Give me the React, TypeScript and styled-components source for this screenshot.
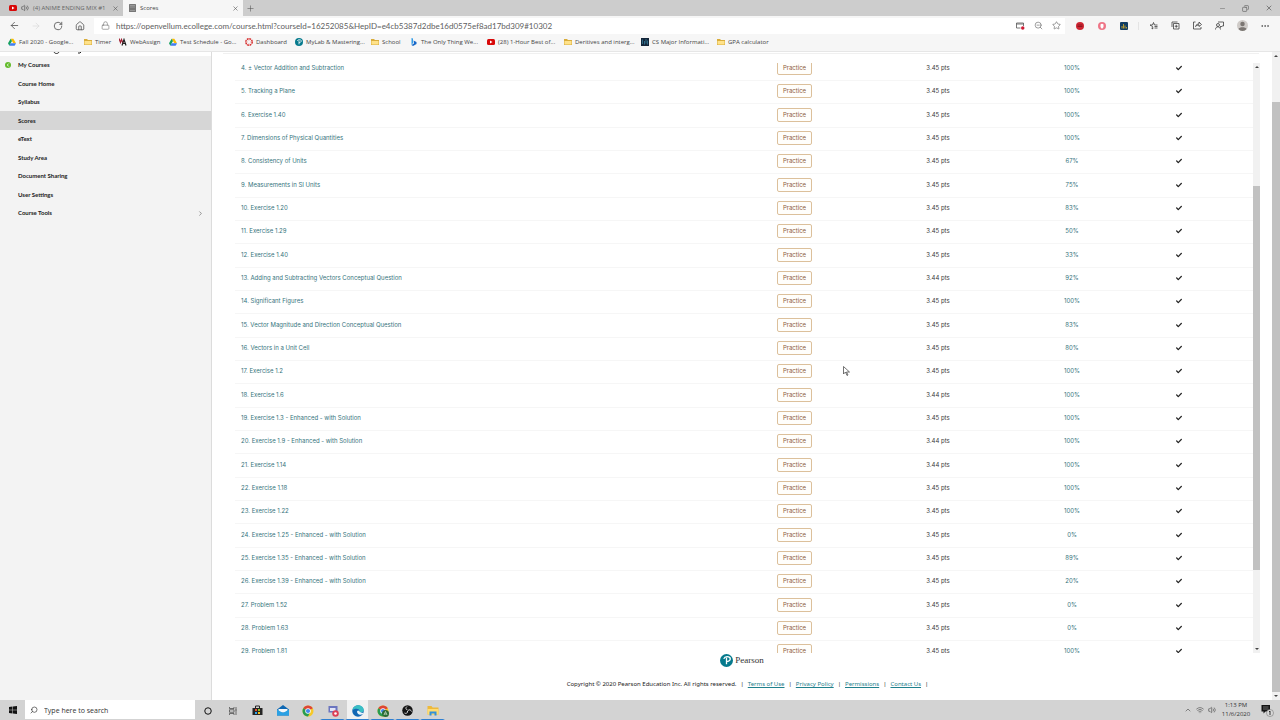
import React from "react";
import styled, { createGlobalStyle } from "styled-components";
import {
  ArrowLeft,
  ArrowRight,
  RotateCw,
  House,
  Lock,
  ZoomOut,
  Star,
  Plus,
  X,
  Minus,
  Copy,
  Ellipsis,
  Search,
  ChevronRight,
  ChevronUp,
  Wifi,
  Volume2,
} from "lucide-react";
import { FaCheck } from "react-icons/fa";

const GlobalStyle = createGlobalStyle`
  * { box-sizing: border-box; }
  body { margin: 0; background: #fff; font-family: "Open Sans", "Noto Sans", sans-serif; }
  button { border: 0; padding: 0; background: none; font: inherit; color: inherit; }
  input { border: 0; padding: 0; outline: 0; background: none; }
  ul { margin: 0; padding: 0; list-style: none; }
  svg { display: block; flex: none; }
`;

const Screen = styled.div`
  position: relative;
  display: flex;
  flex-direction: column;
  height: 100vh;
  overflow: hidden;
`;

/* Browser frame */

const TabStrip = styled.header`
  display: flex;
  flex: none;
  height: 16px;
  background: #cdcdcd;
`;

const Tab = styled.div<{ $active?: boolean; $width: number }>`
  display: flex;
  align-items: center;
  gap: 4px;
  width: ${(p) => p.$width}px;
  padding: 0 4px 0 ${(p) => (p.$active ? 6 : 9)}px;
  background: ${(p) => (p.$active ? "#f6f6f6" : "#c8c8c8")};
  font-size: 6px;
  line-height: 16px;
`;

const TabTitle = styled.span<{ $faded?: boolean }>`
  flex: 1;
  white-space: nowrap;
  color: ${(p) => (p.$faded ? "#666" : "#444")};
`;

const GlyphButton = styled.button<{ $width?: number }>`
  display: flex;
  flex: none;
  align-items: center;
  justify-content: center;
  width: ${(p) => p.$width ?? 8}px;
  color: #555;
`;

const WindowButtons = styled.div`
  display: flex;
  margin-left: auto;
`;

const Toolbar = styled.div`
  display: flex;
  flex: none;
  align-items: center;
  height: 19px;
  padding-left: 3px;
  background: #f6f6f6;
`;

const AddressBox = styled.label`
  display: flex;
  flex: 1;
  align-items: center;
  height: 16px;
  margin-left: 3px;
  padding-left: 7px;
  background: #fff;
`;

const AddressInput = styled.input`
  flex: 1;
  min-width: 0;
  margin-left: 6px;
  color: #606060;
  font: 8px/16px Lato, sans-serif;
`;

const Extensions = styled.div`
  display: flex;
  margin-left: 4px;
  padding-right: 3px;
  border-right: 1px solid #e4e4e4;
`;

const ToolbarEnd = styled.div`
  display: flex;
  margin-left: 3px;
  padding-right: 4px;
`;

const Bookmarks = styled.nav`
  display: grid;
  flex: none;
  grid-template-columns: 76px 35px 50px 76px 50px 76px 39px 77px 77px 77px 76px auto;
  align-items: center;
  height: 17px;
  padding: 0 0 2px 8px;
  border-bottom: 1px solid #e6e6e6;
  background: #f6f6f6;
`;

const Bookmark = styled.a`
  display: flex;
  align-items: center;
  gap: 3px;
  height: 14px;
  color: #444;
  font-size: 6px;
  line-height: 14px;
  text-decoration: none;
  white-space: nowrap;
`;

/* Page */

const Page = styled.div`
  display: flex;
  flex: 1;
  min-height: 0;
`;

const Sidebar = styled.aside`
  flex: none;
  width: 212px;
  border-right: 1px solid #dcdcdc;
  background: #f3f3f3;
`;

const SidebarTop = styled.div`
  height: 4px;
  padding-left: 53px;
  background: #fff;
`;

const NavItem = styled.li<{ $selected?: boolean }>`
  display: flex;
  align-items: center;
  height: 18px;
  padding: 0 7px 0 5px;
  background: ${(p) => (p.$selected ? "#d6d6d6" : "transparent")};
  &:nth-child(even) {
    height: 19px;
  }
`;

const NavMark = styled.span`
  width: 13px;
`;

const NavLink = styled.a`
  flex: 1;
  color: #222;
  font: 700 6px/18px Lato, "Open Sans", sans-serif;
  text-decoration: none;
`;

const Content = styled.main`
  display: flex;
  flex: 1;
  flex-direction: column;
  min-width: 0;
`;

const ContentTop = styled.div`
  flex: none;
  height: 11px;
  margin: 0 13px 0 11px;
  padding-top: 1px;
  &::before {
    display: block;
    border-top: 1px solid #f0f0f0;
    content: "";
  }
`;

const ScoreArea = styled.section`
  display: flex;
  flex: 1;
  min-height: 0;
  padding: 0 12px 0 23px;
`;

const ScoreView = styled.div`
  flex: 1;
  overflow: hidden;
`;

const ScoreTable = styled.table`
  width: 100%;
  margin-top: -5px;
  border-spacing: 0;
  table-layout: fixed;
  color: #3a3a3a;
  font: 6px/14px Inter, sans-serif;
`;

const ScoreRow = styled.tr`
  height: 23px;
  &:nth-child(3n) {
    height: 24px;
  }
`;

const Cell = styled.td`
  padding: 0 0 2px;
  border-bottom: 1px solid #f6f6f6;
  text-align: center;
`;

const NameCell = styled(Cell)`
  padding-left: 6px;
  text-align: left;
`;

const StatusCell = styled(Cell)`
  padding-right: 30px;
`;

const Col = styled.col<{ $width?: number }>`
  width: ${(p) => (p.$width ? `${p.$width}px` : "auto")};
`;

const CheckIcon = styled(FaCheck)`
  width: 6px;
  height: 6px;
  margin: 0 auto;
  color: #222;
`;

const TealLink = styled.a`
  color: #35747d;
  text-decoration: none;
`;

const PracticeButton = styled.button`
  display: block;
  width: 35px;
  height: 14px;
  margin: 0 auto;
  border: 1px solid #dcc09b;
  border-radius: 2px;
  background: #fffefb;
  color: #8d5c3d;
  line-height: 12px;
`;

const ScrollTrack = styled.div<{ $width: number }>`
  display: flex;
  flex: none;
  flex-direction: column;
  align-items: center;
  justify-content: space-between;
  width: ${(p) => p.$width}px;
  background: #f1f1f1;
`;

const ScrollThumb = styled.div<{ $before: number; $size: number; $after: number }>`
  display: grid;
  flex: 1;
  grid-template-rows: ${(p) => `${p.$before}fr ${p.$size}fr ${p.$after}fr`};
  width: 100%;
  &::before {
    grid-row: 2;
    background: #c1c1c1;
    content: "";
  }
`;

const Footer = styled.footer`
  display: flex;
  flex: none;
  flex-direction: column;
  align-items: center;
  height: 47px;
`;

const Brand = styled.div`
  display: flex;
  align-items: center;
  gap: 2px;
  height: 14px;
  color: #333;
  font: 9px/14px "Liberation Serif", serif;
`;

const Legal = styled.div`
  display: flex;
  gap: 4px;
  margin: 10px 0 0 11px;
  color: #222;
  font: 6px/14px "Noto Sans", sans-serif;
`;

const LegalText = styled.span`
  white-space: nowrap;
`;

const LegalLink = styled.a`
  color: #1f808c;
  white-space: nowrap;
`;

/* Taskbar */

const Taskbar = styled.footer`
  display: flex;
  flex: none;
  height: 20px;
  background: #d3d3d3;
`;

const StartButton = styled.button`
  display: flex;
  align-items: center;
  justify-content: center;
  width: 25px;
`;

const SearchBox = styled.label`
  display: flex;
  align-items: center;
  gap: 6px;
  width: 170px;
  height: 20px;
  padding-left: 5px;
  border-bottom: 1px solid #d3d3d3;
  background: #fff;
  color: #333;
`;

const SearchInput = styled.input`
  flex: 1;
  min-width: 0;
  height: 20px;
  padding-top: 1px;
  font: 7px/19px "Open Sans", sans-serif;
  &::placeholder {
    color: #333;
    opacity: 1;
  }
`;

const AppButton = styled.button<{ $open?: boolean; $active?: boolean }>`
  display: flex;
  align-items: center;
  justify-content: center;
  width: 25px;
  padding-top: 2px;
  border-right: 2px solid #d3d3d3;
  border-left: 2px solid #d3d3d3;
  border-bottom: 1px solid ${(p) => (p.$open ? "#2f7fd0" : "transparent")};
  background: ${(p) => (p.$active ? "#f1f1f1" : "transparent")};
`;

const Tray = styled.div`
  display: flex;
  align-items: center;
  margin-left: auto;
  color: #333;
`;

const Clock = styled.time`
  width: 36px;
  font-size: 6px;
  line-height: 9px;
  text-align: center;
`;

const Pointer = styled.svg`
  position: absolute;
  top: 366px;
  left: 843px;
`;

/* Drawings */

const DriveIcon = () => (
  <svg width="8" height="8" viewBox="0 0 24 24">
    <path d="M8 2h8l8 14h-8z" fill="#fbbc04" />
    <path d="M8 2l4 7L4 23 0 16z" fill="#16a15f" />
    <path d="M8 16h16l-4 7H4z" fill="#3f7df0" />
  </svg>
);

const FolderIcon = () => (
  <svg width="8" height="8" viewBox="0 0 16 16">
    <path d="M0 2h6l2 2h8v10H0z" fill="#d9ad3c" />
    <path d="M1 6h14v7H1z" fill="#ffe28a" />
  </svg>
);

const WebAssignIcon = () => (
  <svg width="8" height="8" viewBox="0 0 16 16" fill="none" strokeWidth="2.4">
    <path d="M0 1l3 8 2-6 3 7" stroke="#a22035" />
    <path d="M6 15l4-12 4 12M8 11h6" stroke="#222" />
  </svg>
);

const CanvasIcon = () => (
  <svg width="8" height="8" viewBox="0 0 16 16">
    <circle cx="8" cy="8" r="6.4" fill="none" stroke="#d62b2b" strokeWidth="3" strokeDasharray="3.6 1.4" />
    <circle cx="8" cy="8" r="3.4" fill="none" stroke="#e56868" strokeWidth="1" strokeDasharray="1 1.6" />
  </svg>
);

const PearsonIcon = ({ size }: { size: number }) => (
  <svg width={size} height={size} viewBox="0 0 24 24">
    <circle cx="12" cy="12" r="12" fill="#067a8d" />
    <path
      d="M7 9c1-3 3-4 6-4 4 0 6 2 6 4s-3 5-7 5M12 7v12"
      fill="none"
      stroke="#fff"
      strokeWidth="2.4"
    />
  </svg>
);

const BingIcon = () => (
  <svg width="8" height="8" viewBox="0 0 16 16">
    <path d="M3 0l3 1v9l-3 4z" fill="#2f9be8" />
    <path d="M7 5l6 3v4l-7 4-3-2 5-3z" fill="#1667c7" />
  </svg>
);

const YoutubeIcon = () => (
  <svg width="8" height="8" viewBox="0 0 16 16">
    <rect y="2" width="16" height="12" rx="3" fill="#d80808" />
    <path d="M6 5l5 3-5 3z" fill="#fff" />
  </svg>
);

const SkylineIcon = () => (
  <svg width="8" height="8" viewBox="0 0 16 16">
    <rect width="16" height="16" fill="#14263a" />
    <path d="M3 3v9M7 6v7M10 2v9M13 5v8" stroke="#3f8fae" strokeWidth="1.3" />
  </svg>
);

const DocumentIcon = () => (
  <svg width="7" height="8" viewBox="0 0 14 16">
    <rect width="14" height="16" rx="1" fill="#777" />
    <path d="M2 3h10M2 6h10M2 13h10" stroke="#bbb" />
  </svg>
);

const PopupBlockedIcon = () => (
  <svg width="9" height="8" viewBox="0 0 18 16">
    <path d="M1 12V2h14v6M1 4h14M1 12h8" fill="none" stroke="#555" strokeWidth="1.6" />
    <circle cx="13.5" cy="12" r="3.5" fill="#cf1b35" />
  </svg>
);

const RedBlockIcon = () => (
  <svg width="8" height="8" viewBox="0 0 16 16">
    <circle cx="8" cy="8" r="8" fill="#cf2633" />
    <path d="M3 6h10M3 9h10" stroke="#8f1721" strokeWidth="2" />
  </svg>
);

const AdblockIcon = () => (
  <svg width="8" height="8" viewBox="0 0 16 16">
    <circle cx="8" cy="8" r="8" fill="#ee7587" />
    <path d="M5 5c1-2 5-2 6 0v5l-2 3H7l-2-3z" fill="#fff" />
  </svg>
);

const ChartIcon = () => (
  <svg width="8" height="8" viewBox="0 0 16 16">
    <rect width="16" height="16" rx="2" fill="#103c63" />
    <path d="M4 13V8M7 13V4M10 13V7M13 13v-3" stroke="#b69b35" strokeWidth="2" />
  </svg>
);

const FavoritesIcon = () => (
  <svg width="9" height="8" viewBox="0 0 18 16" fill="none" stroke="#333" strokeWidth="1.5">
    <path d="M9 12l-3 2 1-5-5-3h5l2-5 2 5h6M11 9h6M11 12h6" />
  </svg>
);

const CollectionsIcon = () => (
  <svg width="9" height="9" viewBox="0 0 18 18" fill="none" stroke="#333" strokeWidth="1.5">
    <path d="M5 5h11v11H5zM2 12V2h11M10.5 7.5v6M7.5 10.5h6" />
  </svg>
);

const ShareIcon = () => (
  <svg width="9" height="9" viewBox="0 0 18 18" fill="none" stroke="#333" strokeWidth="1.5">
    <path d="M5 2H1v14h15v-4M5 11c1-4 4-5 7-5V2l5 5-5 4V8c-3 0-5 1-7 3z" />
  </svg>
);

const FeedbackIcon = () => (
  <svg width="9" height="9" viewBox="0 0 18 18" fill="none" stroke="#333" strokeWidth="1.5">
    <circle cx="6" cy="8" r="3" />
    <path d="M1 17c0-7 9-7 10 0M6 2h11v8h-3l-3 3v-3" />
  </svg>
);

const AvatarIcon = () => (
  <svg width="11" height="11" viewBox="0 0 22 22">
    <circle cx="11" cy="11" r="11" fill="#cfcbc8" />
    <circle cx="11" cy="8" r="4.5" fill="#7b7672" />
    <path d="M3 18c2-5 14-5 16 0-4 5-12 5-16 0z" fill="#7b7672" />
  </svg>
);

const WindowsIcon = () => (
  <svg width="8" height="8" viewBox="0 0 16 16">
    <path d="M0 2l7-1v6.5H0zM8 1l8-1v7.5H8zM0 8.500h7V15l-7-1zM8 8.500h8V16l-8-1z" fill="#111" />
  </svg>
);

const CortanaIcon = () => (
  <svg width="8" height="8" viewBox="0 0 16 16">
    <circle cx="8" cy="8" r="6.5" fill="none" stroke="#111" strokeWidth="2" />
  </svg>
);

const TaskViewIcon = () => (
  <svg width="8" height="8" viewBox="0 0 16 16" fill="none" stroke="#333" strokeWidth="1.3">
    <path d="M1 0v3h9V0M1 16v-3h9v3M1 5.500h9v5H1zM14 0v16M13 6h2" />
  </svg>
);

const StoreIcon = () => (
  <svg width="11" height="11" viewBox="0 0 22 22">
    <path d="M7 6V2h8v4" fill="none" stroke="#222" strokeWidth="2" />
    <path d="M1 6h20v14H1z" fill="#252525" />
    <path d="M6 8h4v4H6z" fill="#e8502d" />
    <path d="M12 8h4v4h-4z" fill="#85bd2a" />
    <path d="M6 14h4v4H6z" fill="#32a5e8" />
    <path d="M12 14h4v4h-4z" fill="#f8bd18" />
  </svg>
);

const MailIcon = () => (
  <svg width="12" height="11" viewBox="0 0 24 22">
    <path d="M0 9L12 0l12 9v12H0z" fill="#0e68b3" />
    <path d="M3 8h18v7H3z" fill="#f5f8fa" />
    <path d="M0 9l12 7 12-7v12H0z" fill="#2aa1e4" />
  </svg>
);

const ChromeIcon = ({ badge }: { badge?: boolean }) => (
  <svg width="12" height="12" viewBox="0 0 24 24">
    <circle cx="12" cy="12" r="11" fill="#f6c927" />
    <path d="M12 12L2.500 6.500A11 11 0 0 1 21.500 6.500z" fill="#dd4637" />
    <path d="M12 12L2.500 6.500A11 11 0 0 0 12 23l3-6z" fill="#279c52" />
    <circle cx="12" cy="12" r="5.5" fill="#fff" />
    <circle cx="12" cy="12" r="4.2" fill="#4387ed" />
    {badge && (
      <>
        <circle cx="17" cy="17" r="7" fill="#2b6b35" />
        <path d="M14 20l3-7 3 7M15 18h4" fill="none" stroke="#d7e8d5" strokeWidth="1.4" />
      </>
    )}
  </svg>
);

const DiscordIcon = () => (
  <svg width="12" height="12" viewBox="0 0 24 24">
    <path d="M3 2h18v16l-5-3H3z" fill="#6b75bf" />
    <path d="M6 6h11v6H6z" fill="#e2e5f7" />
    <circle cx="17" cy="17" r="6.5" fill="#dd3f55" />
    <circle cx="17" cy="17" r="2.6" fill="#fff" />
  </svg>
);

const EdgeIcon = () => (
  <svg width="12" height="12" viewBox="0 0 24 24">
    <circle cx="12" cy="12" r="11.5" fill="#1267b4" />
    <path d="M1 10C3-3 23-2 23.500 10c0 5-7 6-9 3 2-4-5-8-13.500-3z" fill="#39bfc4" />
    <path d="M10 13c0 6 6 8 12 5 2-3-3-2-6-4-2-3-4-4-6-1z" fill="#e9f4fa" />
  </svg>
);

const ObsIcon = () => (
  <svg width="11" height="11" viewBox="0 0 22 22">
    <circle cx="11" cy="11" r="10.5" fill="#151515" />
    <path
      d="M11 10c-4-1-4-5-1-7M12 11c3-3 6-1 7 2M11 12c1 4-3 6-6 4"
      fill="none"
      stroke="#d5d5d5"
      strokeWidth="2"
    />
  </svg>
);

const ExplorerIcon = () => (
  <svg width="12" height="11" viewBox="0 0 24 22">
    <path d="M1 2h8l2 3h12v14H1z" fill="#eeb93a" />
    <path d="M1 8h22v11H1z" fill="#ffdc72" />
    <path d="M5 21v-8h14v8h-4v-4H9v4z" fill="#3390d8" />
  </svg>
);

const NoticeIcon = () => (
  <svg width="13" height="13" viewBox="0 0 26 26">
    <path d="M1 2h17v13H9l-4 4v-4H1z" fill="#151515" />
    <path d="M4 6h11M4 10h11" stroke="#d3d3d3" />
    <circle cx="18" cy="18" r="7" fill="#d9d9d9" stroke="#666" />
    <path d="M16 16l2-2v8" fill="none" stroke="#222" strokeWidth="1.8" />
  </svg>
);

const GreenBackIcon = () => (
  <svg width="6" height="6" viewBox="0 0 12 12">
    <circle cx="6" cy="6" r="6" fill="#63bb2c" />
    <path d="M7.500 3l-3 3 3 3" fill="none" stroke="#fff" strokeWidth="1.6" />
  </svg>
);

const ArrowMark = ({ down }: { down?: boolean }) => (
  <svg width="6" height="8" viewBox="0 0 6 8">
    <path d={down ? "M1 3h4L3 5z" : "M1 5h4L3 3z"} fill="#444" />
  </svg>
);

/* Data */

const bookmarks: [string, React.ReactNode][] = [
  ["Fall 2020 - Google...", <DriveIcon />],
  ["Timer", <FolderIcon />],
  ["WebAssign", <WebAssignIcon />],
  ["Test Schedule - Go...", <DriveIcon />],
  ["Dashboard", <CanvasIcon />],
  ["MyLab & Mastering...", <PearsonIcon size={8} />],
  ["School", <FolderIcon />],
  ["The Only Thing We...", <BingIcon />],
  ["(28) 1-Hour Best of...", <YoutubeIcon />],
  ["Deritives and interg...", <FolderIcon />],
  ["CS Major Informati...", <SkylineIcon />],
  ["GPA calculator", <FolderIcon />],
];

const courseLinks = [
  "My Courses",
  "Course Home",
  "Syllabus",
  "Scores",
  "eText",
  "Study Area",
  "Document Sharing",
  "User Settings",
  "Course Tools",
];

const scores: [string, string, number][] = [
  ["± Vector Addition and Subtraction", "3.45", 100],
  ["Tracking a Plane", "3.45", 100],
  ["Exercise 1.40", "3.45", 100],
  ["Dimensions of Physical Quantities", "3.45", 100],
  ["Consistency of Units", "3.45", 67],
  ["Measurements in SI Units", "3.45", 75],
  ["Exercise 1.20", "3.45", 83],
  ["Exercise 1.29", "3.45", 50],
  ["Exercise 1.40", "3.45", 33],
  ["Adding and Subtracting Vectors Conceptual Question", "3.44", 92],
  ["Significant Figures", "3.45", 100],
  ["Vector Magnitude and Direction Conceptual Question", "3.45", 83],
  ["Vectors in a Unit Cell", "3.45", 80],
  ["Exercise 1.2", "3.45", 100],
  ["Exercise 1.6", "3.44", 100],
  ["Exercise 1.3 - Enhanced - with Solution", "3.45", 100],
  ["Exercise 1.9 - Enhanced - with Solution", "3.44", 100],
  ["Exercise 1.14", "3.44", 100],
  ["Exercise 1.18", "3.45", 100],
  ["Exercise 1.22", "3.45", 100],
  ["Exercise 1.25 - Enhanced - with Solution", "3.45", 0],
  ["Exercise 1.35 - Enhanced - with Solution", "3.45", 89],
  ["Exercise 1.39 - Enhanced - with Solution", "3.45", 20],
  ["Problem 1.52", "3.45", 0],
  ["Problem 1.63", "3.45", 0],
  ["Problem 1.81", "3.45", 100],
];

const legalLinks = ["Terms of Use", "Privacy Policy", "Permissions", "Contact Us"];

const BrowserFrame = () => (
  <>
    <TabStrip>
      <Tab $width={123}>
        <YoutubeIcon />
        <Volume2 size={8} color="#555" />
        <TabTitle $faded>(4) ANIME ENDING MIX #1</TabTitle>
        <GlyphButton aria-label="Close tab">
          <X size={7} />
        </GlyphButton>
      </Tab>
      <Tab $active $width={120}>
        <DocumentIcon />
        <TabTitle>Scores</TabTitle>
        <GlyphButton aria-label="Close tab">
          <X size={7} />
        </GlyphButton>
      </Tab>
      <GlyphButton $width={15} aria-label="New tab">
        <Plus size={9} strokeWidth={1.5} />
      </GlyphButton>
      <WindowButtons>
        <GlyphButton $width={23} aria-label="Minimize">
          <Minus size={7} strokeWidth={1.5} />
        </GlyphButton>
        <GlyphButton $width={23} aria-label="Restore">
          <Copy size={7} transform="scale(-1 1)" />
        </GlyphButton>
        <GlyphButton $width={23} aria-label="Close window">
          <X size={8} />
        </GlyphButton>
      </WindowButtons>
    </TabStrip>
    <Toolbar>
      <GlyphButton $width={22} aria-label="Back">
        <ArrowLeft size={11} strokeWidth={1.8} />
      </GlyphButton>
      <GlyphButton $width={22} aria-label="Forward" disabled>
        <ArrowRight size={10} strokeWidth={1.5} color="#d5d5d5" />
      </GlyphButton>
      <GlyphButton $width={22} aria-label="Refresh">
        <RotateCw size={10} />
      </GlyphButton>
      <GlyphButton $width={22} aria-label="Home">
        <House size={10} />
      </GlyphButton>
      <AddressBox>
        <Lock size={9} strokeWidth={1.5} color="#666" />
        <AddressInput
          aria-label="Address"
          defaultValue="https://openvellum.ecollege.com/course.html?courseId=16252085&HepID=e4cb5387d2dbe16d0575ef8ad17bd309#10302"
        />
        <GlyphButton $width={18} aria-label="Pop-up blocked">
          <PopupBlockedIcon />
        </GlyphButton>
        <GlyphButton $width={18} aria-label="Zoom out">
          <ZoomOut size={9} strokeWidth={1.5} />
        </GlyphButton>
        <GlyphButton $width={18} aria-label="Add to favorites">
          <Star size={9} strokeWidth={1.5} />
        </GlyphButton>
      </AddressBox>
      <Extensions>
        <GlyphButton $width={22} aria-label="Blocker">
          <RedBlockIcon />
        </GlyphButton>
        <GlyphButton $width={22} aria-label="Ad blocker">
          <AdblockIcon />
        </GlyphButton>
        <GlyphButton $width={22} aria-label="Charts">
          <ChartIcon />
        </GlyphButton>
      </Extensions>
      <ToolbarEnd>
        <GlyphButton $width={22} aria-label="Favorites">
          <FavoritesIcon />
        </GlyphButton>
        <GlyphButton $width={22} aria-label="Collections">
          <CollectionsIcon />
        </GlyphButton>
        <GlyphButton $width={22} aria-label="Share">
          <ShareIcon />
        </GlyphButton>
        <GlyphButton $width={22} aria-label="Send feedback">
          <FeedbackIcon />
        </GlyphButton>
        <GlyphButton $width={24} aria-label="Profile">
          <AvatarIcon />
        </GlyphButton>
        <GlyphButton $width={22} aria-label="More">
          <Ellipsis size={10} />
        </GlyphButton>
      </ToolbarEnd>
    </Toolbar>
    <Bookmarks aria-label="Bookmarks">
      {bookmarks.map(([label, icon]) => (
        <Bookmark href="#" key={label}>
          {icon}
          {label}
        </Bookmark>
      ))}
    </Bookmarks>
  </>
);

const CourseMenu = () => (
  <Sidebar>
    <SidebarTop>
      <svg width="32" height="2" viewBox="0 0 32 2" fill="none" stroke="#222">
        <path d="M1 0c1 2 4 2 5 0M25 1h2l1-1" />
      </svg>
    </SidebarTop>
    <ul>
      {courseLinks.map((label, i) => (
        <NavItem key={label} $selected={label === "Scores"}>
          <NavMark>{i === 0 && <GreenBackIcon />}</NavMark>
          <NavLink href="#">{label}</NavLink>
          {label === "Course Tools" && <ChevronRight size={7} color="#555" />}
        </NavItem>
      ))}
    </ul>
  </Sidebar>
);

const ScoreList = () => (
  <ScoreArea>
    <ScoreView>
      <ScoreTable>
        <colgroup>
          <Col />
          <Col $width={143} />
          <Col $width={144} />
          <Col $width={124} />
          <Col $width={119} />
        </colgroup>
        <tbody>
          {scores.map(([name, points, percent], i) => (
            <ScoreRow key={i}>
              <NameCell>
                <TealLink href="#">
                  {i + 4}. {name}
                </TealLink>
              </NameCell>
              <Cell>
                <PracticeButton>Practice</PracticeButton>
              </Cell>
              <Cell>{points} pts</Cell>
              <Cell>
                <TealLink href="#">{percent}%</TealLink>
              </Cell>
              <StatusCell>
                <CheckIcon title="Completed" />
              </StatusCell>
            </ScoreRow>
          ))}
        </tbody>
      </ScoreTable>
    </ScoreView>
    <ScrollTrack $width={7}>
      <ArrowMark />
      <ScrollThumb $before={115} $size={384} $after={75} />
      <ArrowMark down />
    </ScrollTrack>
  </ScoreArea>
);

const DesktopBar = () => (
  <Taskbar>
    <StartButton aria-label="Start">
      <WindowsIcon />
    </StartButton>
    <SearchBox>
      <Search size={8} transform="scale(-1 1)" />
      <SearchInput aria-label="Search" placeholder="Type here to search" />
    </SearchBox>
    <AppButton aria-label="Cortana">
      <CortanaIcon />
    </AppButton>
    <AppButton aria-label="Task view">
      <TaskViewIcon />
    </AppButton>
    <AppButton aria-label="Store">
      <StoreIcon />
    </AppButton>
    <AppButton aria-label="Mail">
      <MailIcon />
    </AppButton>
    <AppButton aria-label="Chrome">
      <ChromeIcon />
    </AppButton>
    <AppButton $open aria-label="Discord">
      <DiscordIcon />
    </AppButton>
    <AppButton $open $active aria-label="Edge">
      <EdgeIcon />
    </AppButton>
    <AppButton $open aria-label="Chrome profile">
      <ChromeIcon badge />
    </AppButton>
    <AppButton $open aria-label="Recorder">
      <ObsIcon />
    </AppButton>
    <AppButton $open aria-label="File Explorer">
      <ExplorerIcon />
    </AppButton>
    <Tray>
      <GlyphButton $width={12} aria-label="Hidden icons">
        <ChevronUp size={8} />
      </GlyphButton>
      <GlyphButton $width={12} aria-label="Network">
        <Wifi size={8} />
      </GlyphButton>
      <GlyphButton $width={12} aria-label="Volume">
        <Volume2 size={8} />
      </GlyphButton>
      <Clock>
        1:13 PM
        <br />
        11/6/2020
      </Clock>
      <GlyphButton $width={26} aria-label="Notifications">
        <NoticeIcon />
      </GlyphButton>
    </Tray>
  </Taskbar>
);

export default function App() {
  return (
    <Screen>
      <GlobalStyle />
      <BrowserFrame />
      <Page>
        <CourseMenu />
        <Content>
          <ContentTop />
          <ScoreList />
          <Footer>
            <Brand>
              <PearsonIcon size={13} />
              Pearson
            </Brand>
            <Legal>
              <LegalText>Copyright © 2020 Pearson Education Inc. All rights reserved.</LegalText>
              <span>|</span>
              {legalLinks.map((label) => (
                <React.Fragment key={label}>
                  <LegalLink href="#">{label}</LegalLink>
                  <span>|</span>
                </React.Fragment>
              ))}
            </Legal>
          </Footer>
        </Content>
        <ScrollTrack $width={8}>
          <ArrowMark />
          <ScrollThumb $before={42} $size={590} $after={0} />
          <ArrowMark down />
        </ScrollTrack>
      </Page>
      <DesktopBar />
      <Pointer width="7" height="10" viewBox="0 0 14 20">
        <path d="M1 1v15l4-4 3 7 2-1-3-6h6z" fill="#fff" stroke="#444" strokeWidth="1.5" />
      </Pointer>
    </Screen>
  );
}
